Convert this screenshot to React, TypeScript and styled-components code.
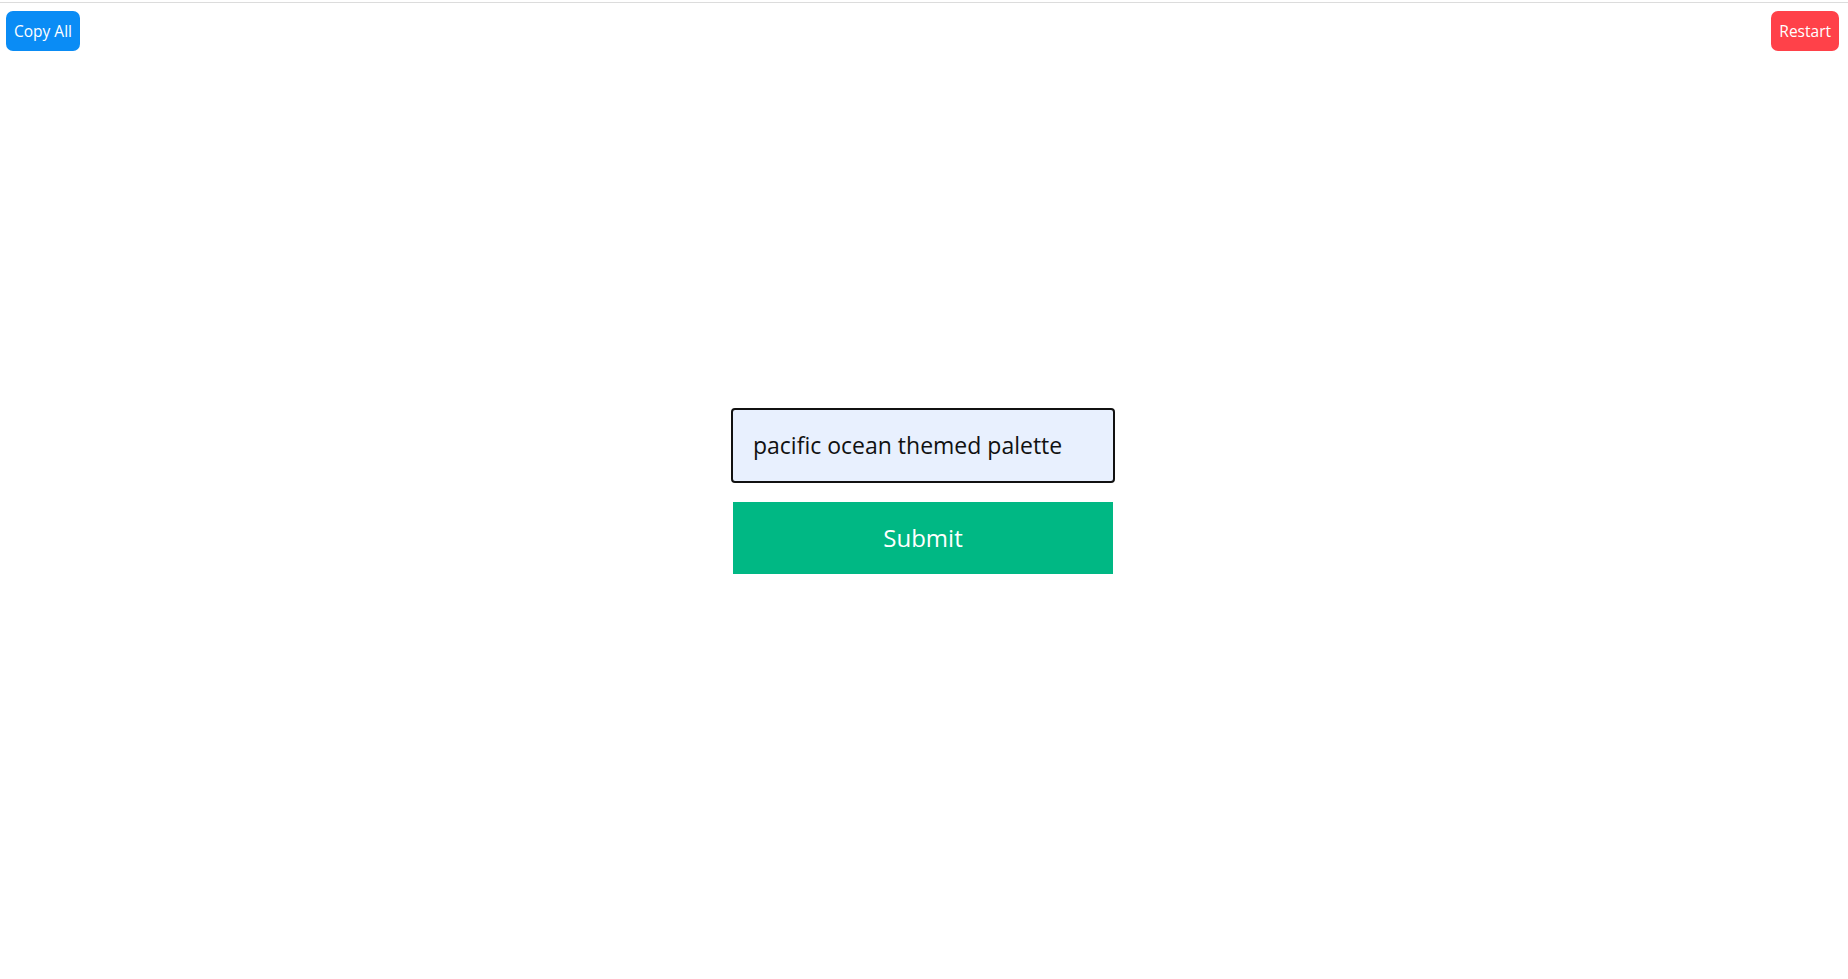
import React, { useEffect, useRef, useState } from "react";
import styled, { createGlobalStyle } from "styled-components";

const GlobalStyle = createGlobalStyle`
  html, body {
    margin: 0;
    padding: 0;
    background: #fff;
    font-family: "Open Sans", "Noto Sans", sans-serif;
  }
  * { box-sizing: border-box; }
`;

const Page = styled.div`
  height: 100vh;
  display: flex;
  flex-direction: column;
  border-top: 2px solid #fff;
  box-shadow: inset 0 1px 0 #dcdcdc;
`;

const TopBar = styled.div`
  display: flex;
  justify-content: space-between;
  align-items: center;
  padding: 9px 9px 0 6px;
`;

const SmallButton = styled.button<{ $color: string }>`
  height: 40px;
  padding: 0 8px;
  border: 0;
  border-radius: 7px;
  background: ${(p) => p.$color};
  color: #fff;
  font-family: inherit;
  font-size: 15.5px;
  cursor: pointer;
`;

const Center = styled.div`
  flex: 1;
  display: flex;
  flex-direction: column;
  align-items: center;
  justify-content: center;
  padding: 0 2px 49px 0;
`;

const Form = styled.form`
  display: flex;
  flex-direction: column;
  align-items: center;
  gap: 19px;
`;

const PromptInput = styled.input`
  width: 384px;
  height: 75px;
  padding: 0 20px;
  border: 2px solid #111;
  border-radius: 4px;
  background: #e8f0fe;
  color: #111;
  caret-color: #111;
  font-family: inherit;
  font-size: 23px;
  outline: none;
`;

const SubmitButton = styled.button`
  width: 380px;
  height: 72px;
  border: 0;
  background: #00b884;
  color: #fff;
  font-family: inherit;
  font-size: 24px;
  cursor: pointer;
`;

export default function App() {
  const [prompt, setPrompt] = useState("pacific ocean themed palette");
  const inputRef = useRef<HTMLInputElement>(null);

  useEffect(() => {
    const el = inputRef.current;
    if (el) {
      el.focus();
      el.setSelectionRange(el.value.length, el.value.length);
    }
  }, []);

  return (
    <>
      <GlobalStyle />
      <Page>
        <TopBar>
          <SmallButton $color="#0a8cf5">Copy All</SmallButton>
          <SmallButton $color="#ff4149">Restart</SmallButton>
        </TopBar>
        <Center>
          <Form onSubmit={(e) => e.preventDefault()}>
            <PromptInput ref={inputRef} value={prompt} onChange={(e) => setPrompt(e.target.value)} />
            <SubmitButton type="submit">Submit</SubmitButton>
          </Form>
        </Center>
      </Page>
    </>
  );
}
